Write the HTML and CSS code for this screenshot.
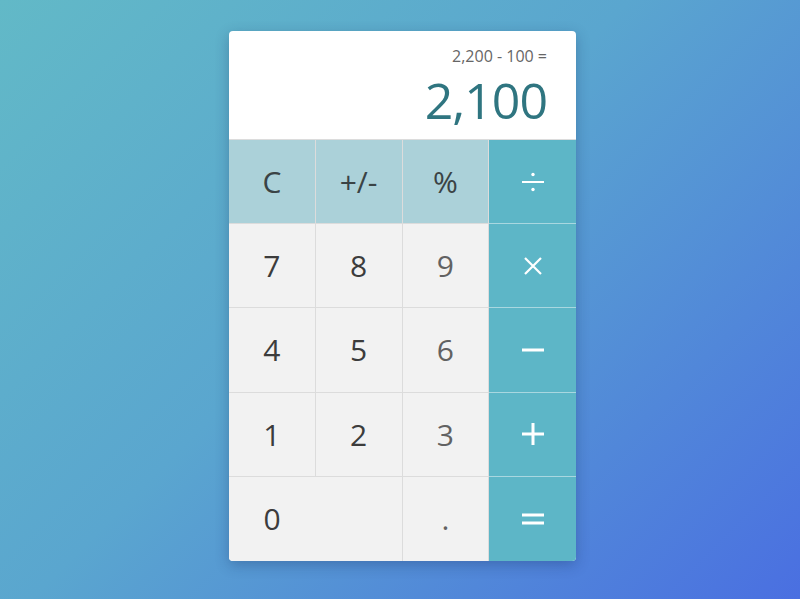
FILE: index.html
```html
<!DOCTYPE html>
<html lang="en">
<head>
<meta charset="utf-8">
<title>Calculator</title>
<link rel="stylesheet" href="styles.css">
</head>
<body>
<main class="calc">
  <div class="display">
    <div class="expr">2,200 - 100 =</div>
    <div class="result">2,100</div>
  </div>
  <div class="keys">
    <button class="key fn">C</button>
    <button class="key fn">+/-</button>
    <button class="key fn">%</button>
    <button class="key op" aria-label="divide">
      <svg width="24" height="24" viewBox="0 0 24 24"><rect x="1" y="11" width="22" height="2" fill="#fff"/><circle cx="12" cy="4.5" r="1.7" fill="#fff"/><circle cx="12" cy="19.5" r="1.7" fill="#fff"/></svg>
    </button>

    <button class="key num">7</button>
    <button class="key num">8</button>
    <button class="key num light">9</button>
    <button class="key op" aria-label="multiply">
      <svg width="24" height="24" viewBox="0 0 24 24"><path d="M4 4 L20 20 M20 4 L4 20" stroke="#fff" stroke-width="2.2" fill="none"/></svg>
    </button>

    <button class="key num">4</button>
    <button class="key num">5</button>
    <button class="key num light">6</button>
    <button class="key op" aria-label="subtract">
      <svg width="24" height="24" viewBox="0 0 24 24"><rect x="1" y="10.5" width="22" height="3" fill="#fff"/></svg>
    </button>

    <button class="key num">1</button>
    <button class="key num">2</button>
    <button class="key num light">3</button>
    <button class="key op" aria-label="add">
      <svg width="24" height="24" viewBox="0 0 24 24"><rect x="1" y="10.5" width="22" height="3" fill="#fff"/><rect x="10.5" y="1" width="3" height="22" fill="#fff"/></svg>
    </button>

    <button class="key num zero"><span>0</span></button>
    <button class="key num light">.</button>
    <button class="key op" aria-label="equals">
      <svg width="24" height="24" viewBox="0 0 24 24"><rect x="1" y="6.5" width="22" height="3" fill="#fff"/><rect x="1" y="14.5" width="22" height="3" fill="#fff"/></svg>
    </button>
  </div>
</main>
</body>
</html>
```

FILE: styles.css
```css
html, body {
  margin: 0;
  height: 100%;
}

body {
  background: linear-gradient(135deg, #62b9c7 0%, #5aa6cf 45%, #4a6fe1 100%);
  font-family: "Open Sans", "DejaVu Sans", sans-serif;
  display: flex;
  justify-content: center;
  align-items: flex-start;
  padding: 31px 0 0 5px;
  box-sizing: border-box;
}

.calc {
  width: 347px;
  background: #fff;
  border-radius: 4px;
  overflow: hidden;
  box-shadow: 0 4px 14px rgba(20, 40, 90, 0.3);
}

.display {
  height: 109px;
  box-sizing: border-box;
  padding: 16px 29px 0 0;
  text-align: right;
  border-bottom: 1px solid #dcdcdc;
}

.expr {
  font-size: 16px;
  line-height: 18px;
  color: #666;
}

.result {
  font-size: 50px;
  line-height: 50px;
  letter-spacing: -1px;
  color: #2f7580;
  margin-top: 10px;
}

.keys {
  display: grid;
  grid-template-columns: repeat(4, 1fr);
  grid-auto-rows: 84.2px;
}

.key {
  margin: 0;
  padding: 0;
  border: 0;
  border-right: 1px solid #dcdcdc;
  border-bottom: 1px solid #dcdcdc;
  font-family: inherit;
  font-size: 30px;
  font-weight: 400;
  color: #3c3c3c;
  display: flex;
  align-items: center;
  justify-content: center;
}

.fn {
  background: #abd1d9;
  color: #3a4345;
}

.num {
  background: #f2f2f2;
}

.num.light {
  color: #626262;
}

.op {
  background: #5db6c7;
  border-right: 0;
  border-bottom: 1px solid #a9d7e0;
}

.keys .key:nth-last-child(-n+3) {
  border-bottom: 0;
}

.zero {
  grid-column: span 2;
  justify-content: flex-start;
}

.zero span {
  width: 86px;
  text-align: center;
}
```
